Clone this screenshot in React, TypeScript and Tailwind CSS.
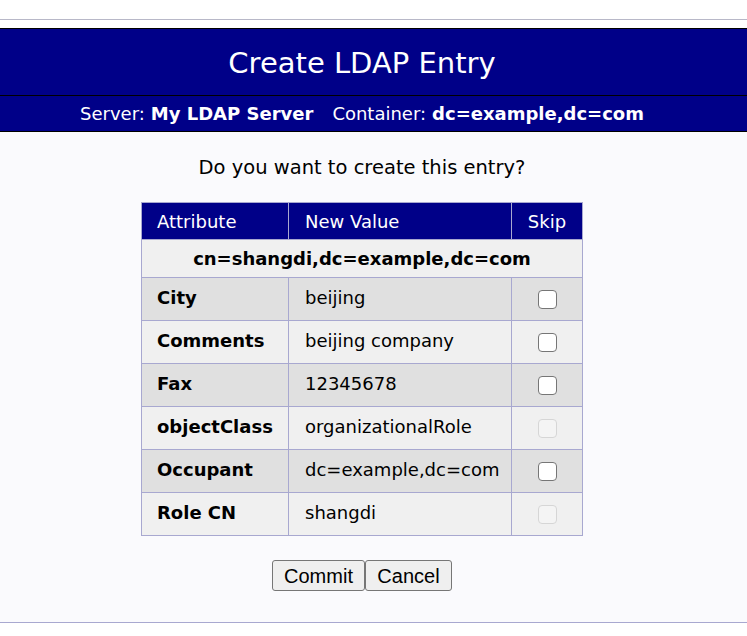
import React from 'react';

type Row = { attr: string; value: string; skippable: boolean };

const rows: Row[] = [
  { attr: 'City', value: 'beijing', skippable: true },
  { attr: 'Comments', value: 'beijing company', skippable: true },
  { attr: 'Fax', value: '12345678', skippable: true },
  { attr: 'objectClass', value: 'organizationalRole', skippable: false },
  { attr: 'Occupant', value: 'dc=example,dc=com', skippable: true },
  { attr: 'Role CN', value: 'shangdi', skippable: false },
];

const SkipBox: React.FC<{ enabled: boolean }> = ({ enabled }) => (
  <input
    type="checkbox"
    disabled={!enabled}
    className={
      'appearance-none block mx-auto w-[19px] h-[19px] rounded-[4px] border ' +
      (enabled ? 'border-[#767676] bg-white' : 'border-[#d6d6d6] bg-[#f4f4f4]')
    }
  />
);

const App: React.FC = () => {
  return (
    <div className="w-[747px] h-[636px] bg-white overflow-hidden font-['DejaVu_Sans',Verdana,sans-serif]">
      <div className="h-[19px]" />
      <div className="h-px bg-[#b8b8c8]" />
      <div className="h-[8px]" />

      <header className="bg-[#000088] text-white border-y border-black">
        <h1 className="h-[66px] w-[724px] flex items-center justify-center text-[29px] pt-[3px]">
          Create LDAP Entry
        </h1>
        <div className="h-[36px] border-t border-black">
          <div className="w-[724px] h-full flex items-center justify-center text-[18px]">
            <span>Server:</span>
            <b className="ml-[6px]">My LDAP Server</b>
            <span className="ml-[19px]">Container:</span>
            <b className="ml-[6px]">dc=example,dc=com</b>
          </div>
        </div>
      </header>

      <main className="bg-[#fafafd] h-[491px] border-b border-[#a8a8d0]">
        <div className="w-[724px] flex flex-col items-center">
          <p className="mt-[21px] text-[19.5px] text-black">Do you want to create this entry?</p>

          <table className="mt-[20px] border-collapse w-[442px] text-[18px] text-black">
            <thead>
              <tr className="bg-[#000088] text-white h-[37px]">
                <th className="border border-[#a8a8d0] w-[147px] text-left font-normal pl-[15px]">Attribute</th>
                <th className="border border-[#a8a8d0] w-[223px] text-left font-normal pl-[16px]">New Value</th>
                <th className="border border-[#a8a8d0] text-center font-normal">Skip</th>
              </tr>
            </thead>
            <tbody>
              <tr className="bg-[#f0f0f0] h-[38px]">
                <td colSpan={3} className="border border-[#a8a8d0] text-center font-bold">
                  cn=shangdi,dc=example,dc=com
                </td>
              </tr>
              {rows.map((r, i) => (
                <tr key={r.attr} className={(i % 2 === 0 ? 'bg-[#e0e0e0]' : 'bg-[#f0f0f0]') + ' h-[43px]'}>
                  <td className="border border-[#a8a8d0] font-bold pl-[15px] pb-[4px]">{r.attr}</td>
                  <td className="border border-[#a8a8d0] pl-[16px] pb-[4px]">{r.value}</td>
                  <td className="border border-[#a8a8d0]">
                    <SkipBox enabled={r.skippable} />
                  </td>
                </tr>
              ))}
            </tbody>
          </table>

          <div className="mt-[24px] flex font-['Liberation_Sans',Arial,sans-serif] text-[20px]">
            <button className="w-[93px] h-[31px] bg-[#efefef] border border-[#767676] rounded-[3px] leading-none">
              Commit
            </button>
            <button className="w-[87px] h-[31px] bg-[#efefef] border border-[#767676] rounded-[3px] leading-none">
              Cancel
            </button>
          </div>
        </div>
      </main>
    </div>
  );
};

export default App;
